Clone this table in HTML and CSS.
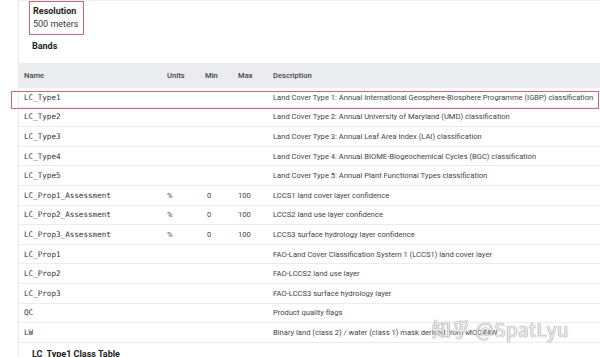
FILE: index.html
```html
<!DOCTYPE html>
<html lang="en">
<head>
    <meta charset="UTF-8">
    <title>MCD12Q1 Bands</title>
    <link rel="stylesheet" href="styles.css">
</head>
<body>
    <div class="content">
        <div class="info">
            <div class="resolution mark-box">
                <div class="label">Resolution</div>
                <div class="value">500 meters</div>
            </div>
            <h3 class="section-title">Bands</h3>
        </div>
        <div class="table-wrap">
            <table class="bands">
                <colgroup>
                    <col class="c-name">
                    <col class="c-units">
                    <col class="c-min">
                    <col class="c-max">
                    <col class="c-desc">
                </colgroup>
                <thead>
                    <tr><th>Name</th><th>Units</th><th>Min</th><th>Max</th><th>Description</th></tr>
                </thead>
                <tbody>
                    <tr><td class="code">LC_Type1</td><td></td><td></td><td></td><td>Land Cover Type 1: Annual International Geosphere-Biosphere Programme (IGBP) classification</td></tr>
                    <tr><td class="code">LC_Type2</td><td></td><td></td><td></td><td>Land Cover Type 2: Annual University of Maryland (UMD) classification</td></tr>
                    <tr><td class="code">LC_Type3</td><td></td><td></td><td></td><td>Land Cover Type 3: Annual Leaf Area Index (LAI) classification</td></tr>
                    <tr><td class="code">LC_Type4</td><td></td><td></td><td></td><td>Land Cover Type 4: Annual BIOME-Biogeochemical Cycles (BGC) classification</td></tr>
                    <tr><td class="code">LC_Type5</td><td></td><td></td><td></td><td>Land Cover Type 5: Annual Plant Functional Types classification</td></tr>
                    <tr><td class="code">LC_Prop1_Assessment</td><td>%</td><td>0</td><td>100</td><td>LCCS1 land cover layer confidence</td></tr>
                    <tr><td class="code">LC_Prop2_Assessment</td><td>%</td><td>0</td><td>100</td><td>LCCS2 land use layer confidence</td></tr>
                    <tr><td class="code">LC_Prop3_Assessment</td><td>%</td><td>0</td><td>100</td><td>LCCS3 surface hydrology layer confidence</td></tr>
                    <tr><td class="code">LC_Prop1</td><td></td><td></td><td></td><td>FAO-Land Cover Classification System 1 (LCCS1) land cover layer</td></tr>
                    <tr><td class="code">LC_Prop2</td><td></td><td></td><td></td><td>FAO-LCCS2 land use layer</td></tr>
                    <tr><td class="code">LC_Prop3</td><td></td><td></td><td></td><td>FAO-LCCS3 surface hydrology layer</td></tr>
                    <tr><td class="code">QC</td><td></td><td></td><td></td><td>Product quality flags</td></tr>
                    <tr><td class="code">LW</td><td></td><td></td><td></td><td>Binary land (class 2) / water (class 1) mask derived from MOD44W</td></tr>
                </tbody>
            </table>
            <div class="row-mark"></div>
        </div>
        <h3 class="section-title class-table">LC_Type1 Class Table</h3>
    </div>
    <div class="watermark">知乎 @SpatLyu</div>
</body>
</html>
```
FILE: styles.css
```css
body {
    margin: 0;
    font-family: Roboto, "Noto Sans", sans-serif;
    color: #3c3c3c;
    background-color: #ffffff;
    overflow: hidden;
    height: 357px;
}
.content {
    margin-left: 18px;
    border-left: 1px solid #ececec;
    border-top: 1px solid #f0f0f0;
}
.info {
    padding-left: 10px;
}
.mark-box {
    border: 1.5px solid #c9687c;
}
.resolution {
    display: inline-block;
    padding: 3px 5px 3px 3px;
    font-size: 9px;
    line-height: 13px;
}
.resolution .label {
    font-weight: 700;
    color: #222;
}
.resolution .value {
    color: #3c3c3c;
}
.section-title {
    margin: 0;
    font-size: 9px;
    font-weight: 700;
    color: #222;
    padding: 6px 0 0 3px;
    height: 22px;
}
.table-wrap {
    position: relative;
}
.bands {
    width: 100%;
    border-collapse: collapse;
    table-layout: fixed;
    font-size: 7.6px;
}
.c-name { width: 142px; }
.c-units { width: 39px; }
.c-min { width: 33px; }
.c-max { width: 35px; }
.bands th {
    background-color: #ebecef;
    font-weight: 500;
    color: #444;
    text-align: left;
    height: 25px;
    padding: 0 0 0 5px;
}
.bands th:nth-child(2),
.bands td:nth-child(2) { padding-left: 6px; }
.bands th:nth-child(3) { padding-left: 5px; }
.bands td:nth-child(3) { padding-left: 7px; }
.bands th:nth-child(4),
.bands td:nth-child(4) { padding-left: 5px; }
.bands td {
    height: 18.6px;
    padding: 0 0 0 5px;
    border-bottom: 1px solid #ececec;
    color: #444;
    white-space: nowrap;
}
.bands td.code {
    font-family: "DejaVu Sans Mono", "Liberation Mono", monospace;
    font-size: 7.6px;
    color: #333;
}
.row-mark {
    position: absolute;
    left: -8px;
    right: 1px;
    top: 28px;
    height: 16px;
    border: 1.5px solid #c9687c;
}
.class-table {
    padding-top: 6px;
    padding-left: 13px;
    font-size: 9px;
}
.watermark {
    position: absolute;
    left: 432px;
    top: 315px;
    font-family: "Noto Sans CJK SC", "Noto Sans", sans-serif;
    font-size: 19px;
    color: rgba(255, 255, 255, 0.85);
    text-shadow: 0 0 1px #888, 0 0 1px #888;
    letter-spacing: 0.5px;
}
```
